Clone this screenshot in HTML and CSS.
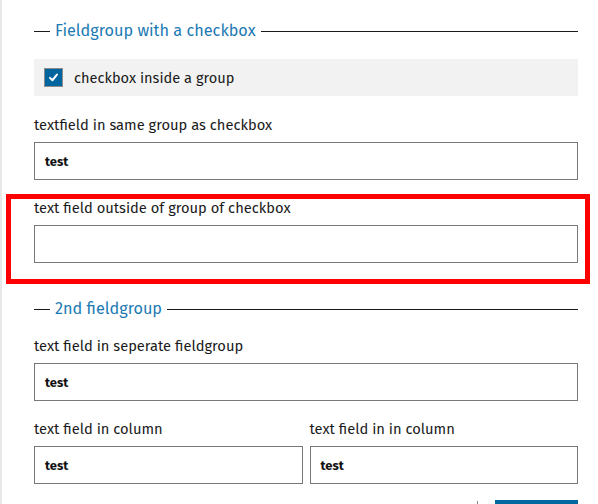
FILE: index.html
```html
<!DOCTYPE html>
<html lang="en">
<head>
<meta charset="utf-8">
<title>Fieldgroups</title>
<link rel="stylesheet" href="styles.css">
</head>
<body>
<div class="page">
  <section class="group">
    <div class="legend"><span class="legend-text">Fieldgroup with a checkbox</span></div>
    <label class="check-row">
      <span class="checkbox">
        <svg viewBox="0 0 12 12" width="11" height="11"><path d="M2.2 6.4 L4.8 9 L9.8 2.8" fill="none" stroke="#fff" stroke-width="2.2" stroke-linecap="round" stroke-linejoin="round"/></svg>
      </span>
      <span class="check-label">checkbox inside a group</span>
    </label>
    <div class="field field-first">
      <div class="label">textfield in same group as checkbox</div>
      <div class="input"><span class="value">test</span></div>
    </div>
  </section>

  <div class="highlight">
    <div class="field">
      <div class="label">text field outside of group of checkbox</div>
      <div class="input"></div>
    </div>
  </div>

  <section class="group group-2">
    <div class="legend"><span class="legend-text">2nd fieldgroup</span></div>
    <div class="field field-sep">
      <div class="label">text field in seperate fieldgroup</div>
      <div class="input"><span class="value">test</span></div>
    </div>
    <div class="columns">
      <div class="field">
        <div class="label">text field in column</div>
        <div class="input"><span class="value">test</span></div>
      </div>
      <div class="field">
        <div class="label">text field in in column</div>
        <div class="input"><span class="value">test</span></div>
      </div>
    </div>
  </section>

  <div class="actions">
    <span class="tick"></span>
    <span class="button" role="button" aria-label="Submit"></span>
  </div>
</div>
</body>
</html>
```

FILE: styles.css
```css
html, body {
  margin: 0;
  padding: 0;
  background: #ffffff;
}

body {
  font-family: "Fira Sans", "Open Sans", "Noto Sans", sans-serif;
  color: #1a1a1a;
  overflow: hidden;
}

.page {
  border-left: 2px solid #e8e8e8;
  min-height: 504px;
  padding: 19px 20px 0 32px;
  box-sizing: border-box;
}

.legend {
  display: flex;
  align-items: center;
  gap: 5px;
  height: 24px;
}

.legend::before {
  content: "";
  width: 16px;
  height: 1px;
  background: #1a1a1a;
}

.legend::after {
  content: "";
  flex: 1;
  height: 1px;
  background: #1a1a1a;
}

.legend-text {
  color: #1c7ab3;
  font-size: 16.25px;
  line-height: 24px;
  white-space: nowrap;
}

.check-row {
  display: flex;
  align-items: center;
  gap: 11px;
  height: 37px;
  margin-top: 16px;
  padding-left: 10px;
  background: #f2f2f2;
}

.checkbox {
  width: 17px;
  height: 17px;
  border: 1px solid #8c8c8c;
  background: #00649e;
  display: flex;
  align-items: center;
  justify-content: center;
}

.check-label {
  font-size: 14.6px;
}

.field {
  display: flex;
  flex-direction: column;
  gap: 7px;
}

.field-first {
  margin-top: 19px;
}

.label {
  font-size: 14.7px;
  line-height: 20px;
  white-space: nowrap;
}

.input {
  height: 36px;
  border: 1px solid #787878;
  background: #fff;
  display: flex;
  align-items: center;
  padding-left: 10px;
}

.value {
  font-size: 13px;
  font-weight: 700;
  color: #111;
}

.highlight {
  margin: 14px -12px 0 -28px;
  padding: 0 7px 16px 23px;
  border: 5px solid #ff0000;
}

.highlight .field {
  margin-top: -1px;
}

.group-2 {
  margin-top: 13px;
}

.field-sep {
  margin-top: 15px;
}

.columns {
  display: grid;
  grid-template-columns: 1fr 1fr;
  column-gap: 7px;
  margin-top: 18px;
}

.actions {
  display: flex;
  justify-content: flex-end;
  align-items: flex-start;
  gap: 17px;
  margin-top: 16px;
}

.tick {
  width: 1px;
  height: 4px;
  margin-top: 1px;
  background: #888;
}

.button {
  display: block;
  width: 83px;
  height: 38px;
  background: #00679f;
}
```
